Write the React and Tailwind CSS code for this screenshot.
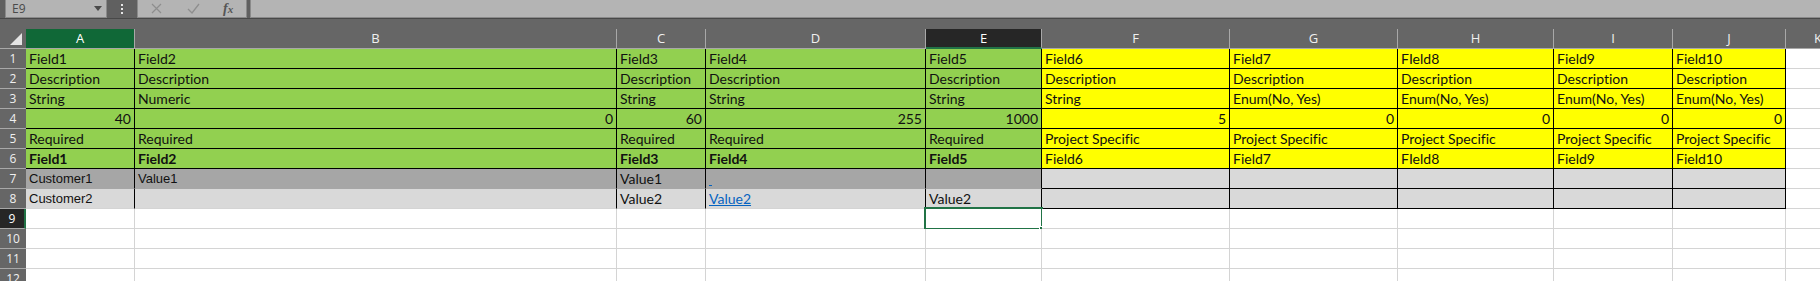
import clsx from "clsx";

const COLS = [
  { key: "A", w: "w-[109px]" },
  { key: "B", w: "w-[482px]" },
  { key: "C", w: "w-[89px]" },
  { key: "D", w: "w-[220px]" },
  { key: "E", w: "w-[116px]" },
  { key: "F", w: "w-[188px]" },
  { key: "G", w: "w-[168px]" },
  { key: "H", w: "w-[156px]" },
  { key: "I", w: "w-[119px]" },
  { key: "J", w: "w-[113px]" },
];

const SHEET = [
  ["Field1", "Field2", "Field3", "Field4", "Field5", "Field6", "Field7", "FIeld8", "Field9", "Field10"],
  Array(10).fill("Description"),
  ["String", "Numeric", "String", "String", "String", "String", "Enum(No, Yes)", "Enum(No, Yes)", "Enum(No, Yes)", "Enum(No, Yes)"],
  ["40", "0", "60", "255", "1000", "5", "0", "0", "0", "0"],
  ["Required", "Required", "Required", "Required", "Required", "Project Specific", "Project Specific", "Project Specific", "Project Specific", "Project Specific"],
  ["Field1", "Field2", "Field3", "Field4", "Field5", "Field6", "Field7", "FIeld8", "Field9", "Field10"],
  ["Customer1", "Value1", "Value1", "", "", "", "", "", "", ""],
  ["Customer2", "", "Value2", "Value2", "Value2", "", "", "", "", ""],
];

function TopBar() {
  return (
    <>
      <div className="flex h-[18px] bg-[#606060]">
        <div className="ml-[5px] flex w-[102px] items-center justify-between border-x border-b border-[#8a8a8a] bg-[#b4b4b4] pl-[6px] pr-[4px] font-['Open_Sans'] text-[12px] text-[#4a4a4a]">
          <span className="leading-none">E9</span>
          <svg width="8" height="5" viewBox="0 0 8 5">
            <path d="M0 0h8L4 5z" fill="#4a4a4a" />
          </svg>
        </div>
        <div className="flex w-[30px] flex-col items-center justify-center gap-[2px]">
          <span className="h-[2px] w-[2px] bg-[#e6e6e6]" />
          <span className="h-[2px] w-[2px] bg-[#e6e6e6]" />
          <span className="h-[2px] w-[2px] bg-[#e6e6e6]" />
        </div>
        <div className="flex w-[110px] items-center border-x border-b border-[#8a8a8a] bg-[#b4b4b4]">
          <svg className="ml-[13px]" width="11" height="11" viewBox="0 0 11 11">
            <path d="M1 1l9 9M10 1l-9 9" stroke="#8e8e8e" strokeWidth="1.2" />
          </svg>
          <svg className="ml-[25px]" width="13" height="11" viewBox="0 0 13 11">
            <path d="M1 6l4 4 7-9" stroke="#8e8e8e" strokeWidth="1.3" fill="none" />
          </svg>
          <span className="ml-[23px] font-['Liberation_Serif'] text-[14px] italic font-bold leading-none text-[#555]">
            f<span className="text-[11px]">x</span>
          </span>
        </div>
        <div className="ml-[3px] flex-1 border-b border-l border-[#8a8a8a] bg-[#b4b4b4]" />
      </div>
      <div className="h-[1px] bg-[#484848]" />
      <div className="h-[10px] bg-[#666]" />
    </>
  );
}

function HeaderRow() {
  return (
    <div className="flex h-[20px] bg-[#666] font-['Open_Sans'] text-[13px] text-[#f0f0f0]">
      <div className="relative h-[20px] w-[26px] shrink-0 border-b border-[#a8a8a8]">
        <svg className="absolute left-[10px] top-[4px]" width="12" height="12" viewBox="0 0 12 12">
          <path d="M12 0v12H0z" fill="#e4e4e4" />
        </svg>
      </div>
      {COLS.map((c) => (
        <div
          key={c.key}
          className={clsx(
            "h-[20px] shrink-0 border-r text-center leading-[19px]",
            c.w,
            c.key === "A" && "border-b border-r-[#a8a8a8] border-b-[#a8a8a8] bg-[#106837] text-white",
            c.key === "E" && "border-b-2 border-r-[#a8a8a8] border-b-[#217346] bg-[#262626] text-white",
            c.key !== "A" && c.key !== "E" && "border-b border-[#a8a8a8]"
          )}
        >
          {c.key}
        </div>
      ))}
      <div className="h-[20px] w-[64px] shrink-0 border-b border-[#a8a8a8] text-center leading-[19px]">K</div>
    </div>
  );
}

function RowHead({ n, active }) {
  return (
    <div
      className={clsx(
        "h-[20px] w-[26px] shrink-0 border-b border-[#a8a8a8] text-center font-['Open_Sans'] text-[12px] leading-[19px]",
        active ? "border-r-2 border-r-[#217346] bg-[#262626] text-white" : "bg-[#666] text-[#f0f0f0]"
      )}
    >
      {n}
    </div>
  );
}

function DataRow({ r, values }) {
  return (
    <div className="flex h-[20px]">
      <RowHead n={r + 1} />
      {COLS.map((c, i) => {
        const v = values[i];
        const head = r < 6;
        const fill = head
          ? i < 5
            ? "bg-[#92d050] border-black"
            : "bg-[#ffff00] border-black"
          : r === 6 && i < 5
          ? "bg-[#a6a6a6] border-r-black border-b-[#a6a6a6]"
          : r === 7 && i < 5
          ? "bg-[#d9d9d9] border-r-black border-b-[#d4d4d4]"
          : "bg-[#d9d9d9] border-black";
        const arial = r >= 6 && i < 2;
        return (
          <div
            key={c.key}
            className={clsx(
              "h-[20px] shrink-0 overflow-hidden whitespace-nowrap border-r border-b px-[3px] leading-[19px] text-[#111] [font-variant-ligatures:none]",
              c.w,
              fill,
              r === 3 && "text-right",
              r === 5 && i < 5 && "font-bold",
              arial ? "font-['Liberation_Sans'] text-[13px]" : "font-['Lato'] text-[14px]"
            )}
          >
            {r === 7 && i === 3 ? (
              <span className="text-[#0563c1] underline">{v}</span>
            ) : r === 6 && i === 3 ? (
              <span className="inline-block h-[17px] w-[3px] border-b border-[#0563c1]" />
            ) : (
              v
            )}
          </div>
        );
      })}
      <div className="h-[20px] w-[64px] shrink-0 border-b border-[#d4d4d4] bg-white" />
    </div>
  );
}

function EmptyRow({ n }) {
  const active = n === 9;
  return (
    <div className="flex h-[20px]">
      <RowHead n={n} active={active} />
      {COLS.map((c) => (
        <div key={c.key} className={clsx("relative h-[20px] shrink-0 border-r border-b border-[#d4d4d4] bg-white", c.w)}>
          {active && c.key === "E" && (
            <div className="absolute -left-[2px] -top-[2px] h-[23px] w-[119px] border-2 border-[#217346]">
              <span className="absolute -bottom-[4px] -right-[4px] h-[6px] w-[6px] border border-white bg-[#217346]" />
            </div>
          )}
        </div>
      ))}
      <div className="h-[20px] w-[64px] shrink-0 border-b border-[#d4d4d4] bg-white" />
    </div>
  );
}

export default function App() {
  return (
    <div className="h-[281px] w-[1820px] overflow-hidden bg-white">
      <TopBar />
      <HeaderRow />
      {SHEET.map((values, r) => (
        <DataRow key={r} r={r} values={values} />
      ))}
      {[9, 10, 11, 12].map((n) => (
        <EmptyRow key={n} n={n} />
      ))}
    </div>
  );
}
